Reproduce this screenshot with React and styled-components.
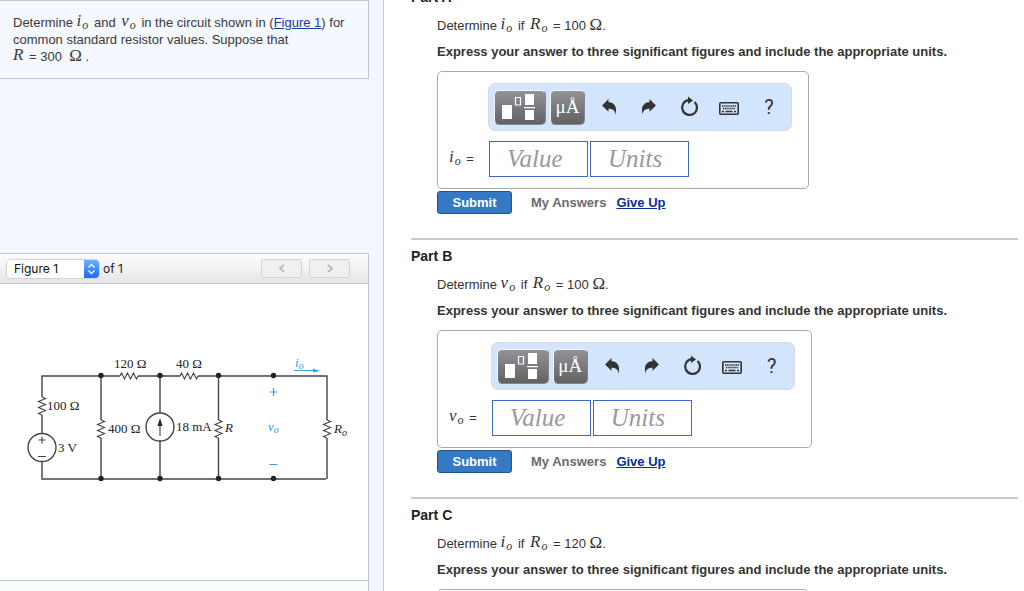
import React, { useId } from "react";
import styled, { createGlobalStyle } from "styled-components";

const sans = '"Liberation Sans", Arial, sans-serif';
const serif = '"Liberation Serif", "Times New Roman", serif';
const ui = 'Inter, Roboto, sans-serif';

const GlobalStyle = createGlobalStyle`
  * { box-sizing: border-box; }
  html, body, #root { height: 100%; }
  body {
    margin: 0;
    overflow: hidden;
    background: #fff;
    color: #333;
    font: 13px/17px ${sans};
  }
  button, input, select { font: inherit; margin: 0; }
`;

const Page = styled.div`
  display: grid;
  grid-template-columns: minmax(384px, 3fr) 5fr;
  height: 100vh;
`;

const Sidebar = styled.aside`
  display: flex;
  flex-direction: column;
  justify-content: space-between;
  padding-right: 14px;
  border-right: 1px solid #b9c9df;
  background: #f3f7fd;
  min-height: 0;
`;

const Intro = styled.section`
  padding: 13px 12px 13px 13px;
  border: 1px solid #b9c9dc;
  border-left: 0;
  background: #f5f8fe;
  color: #3a3a3a;
`;

const IntroText = styled.p`
  margin: 0;
`;

const Var = styled.i`
  margin: 0 2px;
  font-family: ${serif};
  font-size: 17px;
  line-height: 1px;
  vertical-align: 1px;

  p > &:first-child {
    margin-left: 0;
  }
`;

const Sub = styled.span`
  margin-left: 1px;
  font-size: 12px;
  vertical-align: -3px;
`;

const Ohm = styled.span`
  font-family: ${serif};
  font-size: 17px;
  line-height: 1px;
`;

const Link = styled.a`
  color: #1a3a9c;
  text-decoration: underline;
`;

const FigurePanel = styled.section`
  border: 1px solid #b9c9dc;
  border-width: 1px 1px 0 0;
  background: #fff;
`;

const FigureBar = styled.div`
  display: flex;
  align-items: center;
  gap: 4px;
  height: 30px;
  padding: 0 18px 0 7px;
  border-bottom: 1px solid #b9c9dc;
  background: linear-gradient(#fdfdfd, #e6e6e6);
  color: #222;
  font: 12px/16px ${ui};
`;

const SelectWrap = styled.label`
  display: flex;
  width: 92px;
  height: 18px;
  border-radius: 4px;
  overflow: hidden;
  background: #fff;
  box-shadow: 0 0 1px 1px #d2d2d2;
`;

const FigureSelect = styled.select`
  flex: 1;
  min-width: 0;
  padding: 0 7px;
  border: 0;
  appearance: none;
  background: #fff;
  color: #111;
`;

const SelectCap = styled.span`
  display: flex;
  align-items: center;
  justify-content: center;
  width: 15px;
  background: linear-gradient(#6bb0fb, #1e68f8);
`;

const Pager = styled.div`
  display: flex;
  gap: 7px;
  margin-left: auto;
`;

const PagerButton = styled.button`
  display: flex;
  align-items: center;
  justify-content: center;
  width: 41px;
  height: 19px;
  padding: 0;
  border: 1px solid #d3d3d3;
  border-radius: 2px;
  background: #f0f0f0;
`;

const FigureBody = styled.div`
  height: 297px;
  padding: 66px 0 0 20px;
  border-bottom: 1px solid #b9c9dc;
`;

const FigureFooter = styled.div`
  height: 10px;
  background: #fbfcfe;
`;

const Main = styled.main`
  min-width: 0;
  overflow: hidden;
  padding: 0 6px 0 27px;
`;

/* The column is shown part way down, just past the first heading. */
const Scrolled = styled.div`
  margin-top: -21px;
`;

const PartBlock = styled.section`
  padding: 6px 0 24px;
  border-top: 2px solid #c9c9c9;
`;

const PartTitle = styled.h2`
  margin: 0 0 9px;
  color: #222;
  font: bold 14px/20px ${sans};
`;

const PartBody = styled.div`
  padding-left: 26px;
`;

const Question = styled.p`
  margin: 0 0 6px;
  line-height: 20px;
`;

const Instruction = styled.p`
  margin: 0 0 9px;
  font-weight: bold;
  line-height: 20px;
`;

const AnswerBox = styled.form`
  display: grid;
  grid-template-columns: auto auto;
  align-items: center;
  gap: 10px 14px;
  width: fit-content;
  min-height: 118px;
  padding: 11px 16px 11px 9px;
  border: 1px solid #a9a9a9;
  border-radius: 5px;
`;

const Toolbar = styled.div`
  grid-column: 2;
  display: flex;
  align-items: center;
  gap: 4px;
  height: 48px;
  padding: 0 2px 0 5px;
  border: 1px solid #d5dbe2;
  border-radius: 7px;
  background: #d2e5fd;
`;

const PaletteButton = styled.button`
  display: flex;
  align-items: center;
  justify-content: center;
  width: ${(p) => (p.$wide ? 52 : 35)}px;
  height: 35px;
  padding: 0;
  border: 1px solid #f4f6f9;
  border-right-color: #85878c;
  border-bottom-color: #85878c;
  border-radius: 5px;
  background: linear-gradient(#929298, #626264);
  color: #fff;
  font: 19px/24px ${serif};
`;

const ToolGroup = styled.div`
  display: flex;
`;

const ToolButton = styled.button`
  display: flex;
  align-items: center;
  justify-content: center;
  width: 40px;
  height: 34px;
  padding: 0;
  border: 0;
  background: none;
  color: #333;
  font: 20px/24px Roboto, sans-serif;
`;

const AnswerLabel = styled.label`
  line-height: 20px;
`;

const Fields = styled.div`
  display: flex;
  gap: 2px;
  padding-left: 1px;
`;

const Field = styled.input`
  width: 99px;
  height: 36px;
  padding: 0 17px;
  border: 1px solid #3f68c4;
  border-radius: 0;
  background: #fff;
  color: #333;
  font: italic 25px/32px ${serif};
  &::placeholder { color: #999; opacity: 1; }
`;

const Actions = styled.div`
  display: flex;
  align-items: center;
  height: 24px;
  margin-top: 1px;
  font-weight: bold;
`;

const Submit = styled.button`
  width: 75px;
  height: 23px;
  margin-right: 19px;
  padding: 0;
  border: 1px solid #1f5488;
  border-radius: 3px;
  background: #3579c4;
  color: #fff;
  font-weight: bold;
`;

const Muted = styled.span`
  margin-right: 10px;
  color: #6b6b6b;
`;

const ActionLink = styled(Link)`
  color: #0a2f91;
`;

const SvgText = styled.text`
  font: 13px ${serif};
  font-style: ${(p) => (p.$italic ? "italic" : "normal")};
  fill: ${(p) => (p.$blue ? "#2f9bd4" : "#222")};
`;

function Symbol({ name }) {
  return (
    <Var>
      {name}
      <Sub>o</Sub>
    </Var>
  );
}

const zigH = (x, y) =>
  `M${x} ${y}l1.5 -3l3 6l3 -6l3 6l3 -6l3 6l1.5 -3`;
const zigV = (x, y) =>
  `M${x} ${y}l3.5 1.5l-7 3l7 3l-7 3l7 3l-7 3l3.5 1.5`;

function Circuit() {
  return (
    <svg width="340" height="140" viewBox="20 350 340 140" role="img" aria-label="Circuit diagram">
      <g fill="none" stroke="#444" strokeWidth="1.4">
        <path d="M42 397V376H120M138 376H180M198 376H327V420M42 415V433M42 462V479H326M101 376V420M101 438V479M160 376V413M160 441V479M218.500 376V420M218.500 438V479M327 438V479" />
        <circle cx="42" cy="447.500" r="14" />
        <circle cx="160" cy="427" r="14" />
      </g>
      <g fill="none" stroke="#444" strokeWidth="1.100">
        <path d={zigH(120, 376)} />
        <path d={zigH(180, 376)} />
        <path d={zigV(42, 397)} />
        <path d={zigV(101, 420)} />
        <path d={zigV(218.5, 420)} />
        <path d={zigV(327, 420)} />
        <path d="M38.500 440H45.500M42 436.500V443.500M38 456.500H46M160 436V424" />
      </g>
      <path d="M160 418L157.500 426H162.500Z" fill="#222" />
      <g fill="#222">
        {[101, 160, 218.5, 273.5].map((x) => (
          <React.Fragment key={x}>
            <circle cx={x} cy="375.500" r="2.700" />
            <circle cx={x} cy="478.500" r="2.700" />
          </React.Fragment>
        ))}
      </g>
      <g stroke="#3ba3d8" strokeWidth="1.200">
        <path d="M294 370.500H314M269.500 392H277.500M273.500 388V396M269.500 464.500H277.500" />
        <path d="M313 368.500L320 371L313 372.500Z" fill="#3ba3d8" stroke="none" />
      </g>
      <SvgText x="114" y="368">120 Ω</SvgText>
      <SvgText x="176" y="368">40 Ω</SvgText>
      <SvgText x="47" y="410">100 Ω</SvgText>
      <SvgText x="108" y="433">400 Ω</SvgText>
      <SvgText x="58" y="452">3 V</SvgText>
      <SvgText x="176" y="431">18 mA</SvgText>
      <SvgText x="225" y="432" $italic>R</SvgText>
      <SvgText x="334" y="433" $italic>R<tspan dy="3" fontSize="10">o</tspan></SvgText>
      <SvgText x="295" y="367" $italic $blue>i<tspan dy="2" fontSize="10">o</tspan></SvgText>
      <SvgText x="268" y="431" $italic $blue>v<tspan dy="2" fontSize="10">o</tspan></SvgText>
    </svg>
  );
}

const TemplateIcon = () => (
  <svg width="40" height="28" viewBox="0 0 40 28" aria-hidden="true">
    <path d="M2 12H12V26H2ZM25 1H34V12H25ZM25 17H34V27H25ZM24 14H35V15.200H24Z" fill="#fff" />
    <path d="M15.500 4.500H20.500V12H15.500Z" fill="none" stroke="#fff" strokeWidth="1.200" />
  </svg>
);

const UndoIcon = ({ flip }) => (
  <svg width="14" height="16" viewBox="0 0 14 16" aria-hidden="true">
    <path
      transform={flip ? "translate(14 0) scale(-1 1)" : undefined}
      d="M0 6.500L6.500 0V3.200C12.500 3.200 15.500 8 13.300 15.800C13.300 11.800 11 9.800 6.500 9.800V12.800Z"
      fill="#333"
    />
  </svg>
);

const ResetIcon = () => (
  <svg width="20" height="22" viewBox="0 0 20 22" aria-hidden="true">
    <path d="M15.500 6A7.400 7.400 0 1 1 9.500 4.200" fill="none" stroke="#333" strokeWidth="2.200" />
    <path d="M9 0.500L14 4.500L9 8Z" fill="#333" />
  </svg>
);

const KeyboardIcon = () => (
  <svg width="20" height="16" viewBox="0 0 20 16" aria-hidden="true">
    <rect x="0.800" y="3.800" width="18.400" height="11.400" rx="1" fill="#d2e5fd" stroke="#333" strokeWidth="1.600" />
    <path d="M3 7H17M4 9.500H16" stroke="#333" strokeWidth="1.600" strokeDasharray="1.400 0.700" />
    <path d="M3 12.500H5M6.500 12.500H13.500M15 12.500H17" stroke="#333" strokeWidth="1.600" />
  </svg>
);

const Chevron = ({ right }) => (
  <svg width="8" height="9" viewBox="0 0 8 9" aria-hidden="true">
    <path d={right ? "M2 1L6 4.500L2 8" : "M6 1L2 4.500L6 8"} fill="none" stroke="#bbb" strokeWidth="2" />
  </svg>
);

function Part({ letter, symbol, resistance }) {
  const id = useId();
  return (
    <PartBlock>
      <PartTitle>Part {letter}</PartTitle>
      <PartBody>
        <Question>
          Determine <Symbol name={symbol} /> if <Symbol name="R" /> = {resistance} <Ohm>Ω</Ohm>.
        </Question>
        <Instruction>
          Express your answer to three significant figures and include the appropriate units.
        </Instruction>
        <AnswerBox id={`${id}form`} onSubmit={(e) => e.preventDefault()}>
          <Toolbar>
            <PaletteButton type="button" $wide aria-label="Templates"><TemplateIcon /></PaletteButton>
            <PaletteButton type="button">μÅ</PaletteButton>
            <ToolGroup>
              <ToolButton type="button" aria-label="Undo"><UndoIcon /></ToolButton>
              <ToolButton type="button" aria-label="Redo"><UndoIcon flip /></ToolButton>
              <ToolButton type="button" aria-label="Reset"><ResetIcon /></ToolButton>
              <ToolButton type="button" aria-label="Keyboard shortcuts"><KeyboardIcon /></ToolButton>
              <ToolButton type="button">?</ToolButton>
            </ToolGroup>
          </Toolbar>
          <AnswerLabel htmlFor={`${id}value`}>
            <Symbol name={symbol} /> =
          </AnswerLabel>
          <Fields>
            <Field id={`${id}value`} placeholder="Value" />
            <Field aria-label="Units" placeholder="Units" />
          </Fields>
        </AnswerBox>
        <Actions>
          <Submit type="submit" form={`${id}form`}>Submit</Submit>
          <Muted>My Answers</Muted>
          <ActionLink href="#give-up">Give Up</ActionLink>
        </Actions>
      </PartBody>
    </PartBlock>
  );
}

export default function App() {
  return (
    <>
      <GlobalStyle />
      <Page>
        <Sidebar>
          <Intro>
            <IntroText>
              Determine&nbsp;<Symbol name="i" /> and&nbsp;<Symbol name="v" /> in the circuit shown in (
              <Link href="#figure">Figure 1</Link>) for common standard resistor values. Suppose that
            </IntroText>
            <IntroText>
              <Var>R</Var> = 300 &nbsp;<Ohm>Ω</Ohm> .
            </IntroText>
          </Intro>
          <FigurePanel id="figure">
            <FigureBar>
              <SelectWrap>
                <FigureSelect aria-label="Figure">
                  <option>Figure 1</option>
                </FigureSelect>
                <SelectCap>
                  <svg width="9" height="12" viewBox="0 0 9 12" aria-hidden="true">
                    <path d="M1.500 4.500L4.500 1.500L7.500 4.500M1.500 7.500L4.500 10.500L7.500 7.500" fill="none" stroke="#fff" strokeWidth="1.300" />
                  </svg>
                </SelectCap>
              </SelectWrap>
              <span>of 1</span>
              <Pager>
                <PagerButton type="button" aria-label="Previous figure"><Chevron /></PagerButton>
                <PagerButton type="button" aria-label="Next figure"><Chevron right /></PagerButton>
              </Pager>
            </FigureBar>
            <FigureBody>
              <Circuit />
            </FigureBody>
            <FigureFooter />
          </FigurePanel>
        </Sidebar>
        <Main>
          <Scrolled>
            <Part letter="A" symbol="i" resistance="100" />
            <Part letter="B" symbol="v" resistance="100" />
            <Part letter="C" symbol="i" resistance="120" />
          </Scrolled>
        </Main>
      </Page>
    </>
  );
}
